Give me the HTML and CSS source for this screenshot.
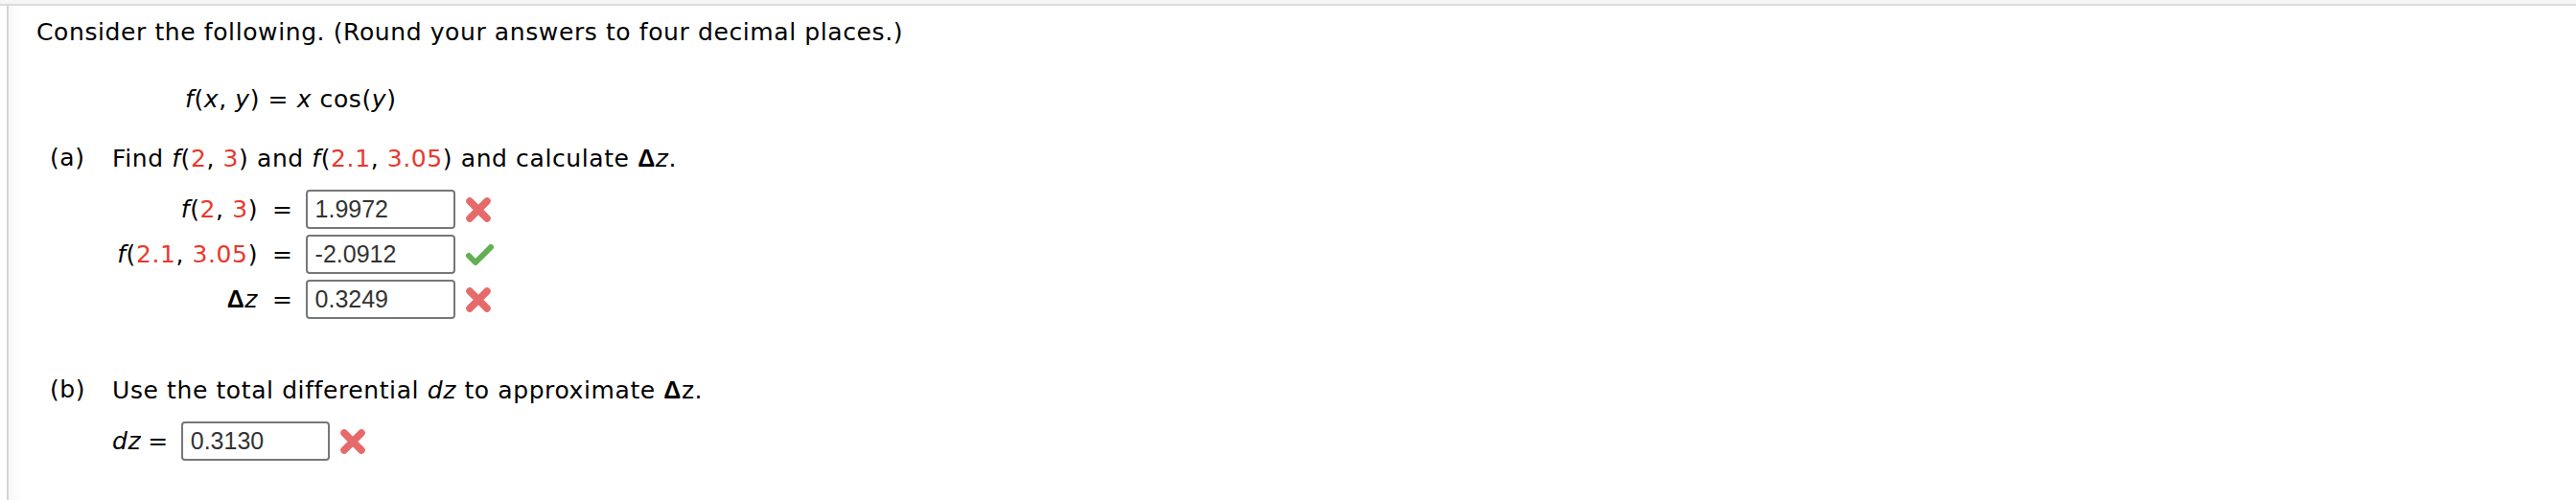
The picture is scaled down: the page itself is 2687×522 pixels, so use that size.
FILE: index.html
```html
<!DOCTYPE html>
<html lang="en">
<head>
    <meta charset="UTF-8">
    <title>Total differential</title>
    <link rel="stylesheet" href="styles.css">
</head>
<body>
    <div class="topbar"></div>
    <div class="question">
        <p class="intro">Consider the following. (Round your answers to four decimal places.)</p>
        <p class="formula"><i>f</i>(<i>x</i>, <i>y</i>) = <i>x</i> cos(<i>y</i>)</p>

        <div class="part part-a">
            <span class="part-label">(a)</span>
            <div class="part-body">
                <p>Find <i>f</i>(<span class="given">2</span>, <span class="given">3</span>) and <i>f</i>(<span class="given">2.1</span>, <span class="given">3.05</span>) and calculate <span class="delta">&Delta;</span><i>z</i>.</p>
                <div class="answers">
                    <span class="ans-label"><i>f</i>(<span class="given">2</span>, <span class="given">3</span>)</span>
                    <span class="eq">=</span>
                    <input class="answer" type="text" value="1.9972" readonly>
                    <span class="mark">
                        <svg width="28" height="26" viewBox="0 0 28 26"><path d="M5 4 L23 22 M23 4 L5 22" class="cross"/></svg>
                    </span>

                    <span class="ans-label"><i>f</i>(<span class="given">2.1</span>, <span class="given">3.05</span>)</span>
                    <span class="eq">=</span>
                    <input class="answer" type="text" value="-2.0912" readonly>
                    <span class="mark">
                        <svg width="31" height="26" viewBox="0 0 31 26"><path d="M4 14 L11 21 L27 5" class="check"/></svg>
                    </span>

                    <span class="ans-label"><span class="delta">&Delta;</span><i>z</i></span>
                    <span class="eq">=</span>
                    <input class="answer" type="text" value="0.3249" readonly>
                    <span class="mark">
                        <svg width="28" height="26" viewBox="0 0 28 26"><path d="M5 4 L23 22 M23 4 L5 22" class="cross"/></svg>
                    </span>
                </div>
            </div>
        </div>

        <div class="part part-b">
            <span class="part-label">(b)</span>
            <div class="part-body">
                <p>Use the total differential <i>dz</i> to approximate <span class="delta">&Delta;</span>z.</p>
                <div class="answers answers-short">
                    <span class="ans-label"><i>dz</i></span>
                    <span class="eq">=</span>
                    <input class="answer" type="text" value="0.3130" readonly>
                    <span class="mark">
                        <svg width="28" height="26" viewBox="0 0 28 26"><path d="M5 4 L23 22 M23 4 L5 22" class="cross"/></svg>
                    </span>
                </div>
            </div>
        </div>
    </div>
</body>
</html>
```

FILE: styles.css
```css
html, body {
    margin: 0;
    padding: 0;
    background: #fff;
}
body {
    font-family: "DejaVu Sans", Verdana, sans-serif;
    font-size: 25px;
    line-height: 30px;
    letter-spacing: 0.6px;
    color: #000;
    min-height: 522px;
}
p {
    margin: 0;
}
.topbar {
    height: 4px;
    background: #f6f6f6;
    border-bottom: 2px solid #dcdcdc;
}
.question {
    margin-left: 7px;
    min-height: 516px;
    box-sizing: border-box;
    border-left: 2px solid #d4d4d4;
    padding: 13px 0 0 29px;
    background: linear-gradient(to right, #f8f8f8, #fff 14px);
}
.formula {
    margin: 40px 0 0 155px;
}
.given {
    color: #e8392d;
}
.delta {
    font-weight: bold;
    font-family: "Liberation Sans", Arial, sans-serif;
}
.part {
    display: flex;
    margin-left: 14px;
}
.part-a {
    margin-top: 31px;
}
.part-b {
    margin-top: 59px;
}
.part-label {
    width: 65px;
    flex: none;
}
.answers {
    display: grid;
    grid-template-columns: 152px auto 156px auto;
    grid-auto-rows: 41px;
    row-gap: 6px;
    align-items: center;
    justify-content: start;
    margin-top: 17px;
}
.answers-short {
    grid-template-columns: auto auto 155px auto;
}
.ans-label {
    text-align: right;
    white-space: nowrap;
}
.eq {
    padding: 0 13px 0 15px;
}
.answers-short .eq {
    padding: 0 13px 0 7px;
}
.answer {
    box-sizing: border-box;
    width: 100%;
    height: 41px;
    margin: 0;
    padding: 0 0 0 8px;
    border: 2px solid #777;
    border-radius: 4px;
    font-family: "Liberation Sans", Arial, sans-serif;
    font-size: 25px;
    letter-spacing: 0;
    color: #333;
    background: #fff;
    outline: none;
}
.mark {
    display: flex;
    align-items: center;
    padding-left: 10px;
}
.mark svg {
    filter: blur(0.5px);
}
.cross {
    stroke: #e66a6a;
    stroke-width: 7.5;
    stroke-linecap: round;
    fill: none;
}
.check {
    stroke: #62b052;
    stroke-width: 6;
    stroke-linecap: round;
    stroke-linejoin: round;
    fill: none;
}
```
